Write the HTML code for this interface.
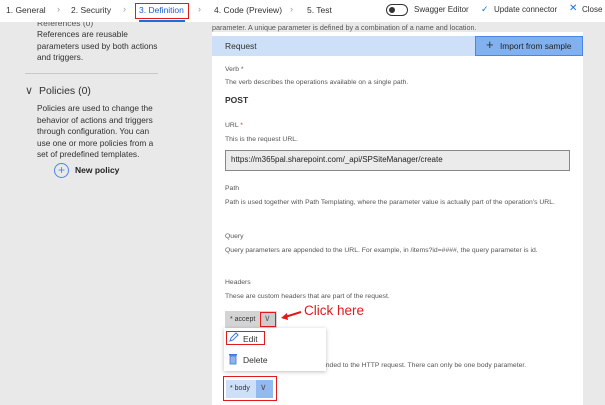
<!DOCTYPE html>
<html><head><style>
*{margin:0;padding:0;box-sizing:border-box}
body{width:605px;height:405px;overflow:hidden;background:#e9e9e9;font-family:"Liberation Sans",sans-serif;color:#323130;position:relative}
.a{position:absolute;white-space:nowrap}
.s{font-size:6.8px;color:#555}
.lt{font-size:8.3px;color:#323130;line-height:11.5px}
.t{font-size:8.5px;color:#323130;top:5px}
.c{font-size:9px;color:#999;top:4px}
</style></head><body>
<div class="a" style="left:37px;top:18px;font-size:8.5px;color:#555">References (0)</div>
<div class="a" style="left:0;top:0;width:605px;height:22px;background:#fff"></div>
<div class="a t" style="left:6px">1. General</div>
<div class="a c" style="left:57px">&#8250;</div>
<div class="a t" style="left:71px">2. Security</div>
<div class="a c" style="left:123px">&#8250;</div>
<div class="a" style="left:135px;top:3px;width:54px;height:16px;border:1.5px solid #e01b1b"></div>
<div class="a t" style="left:139px;color:#1a5fcf">3. Definition</div>
<div class="a" style="left:139px;top:20px;width:46px;height:2px;background:#1a6fe0"></div>
<div class="a c" style="left:198px">&#8250;</div>
<div class="a t" style="left:214px">4. Code (Preview)</div>
<div class="a c" style="left:290px">&#8250;</div>
<div class="a t" style="left:307px">5. Test</div>
<div class="a" style="left:386px;top:4px;width:22px;height:12px;border:1px solid #333;border-radius:6px"></div>
<div class="a" style="left:389px;top:7px;width:6px;height:6px;background:#333;border-radius:50%"></div>
<div class="a" style="left:414px;top:5px;font-size:8px">Swagger Editor</div>
<div class="a" style="left:481px;top:4px;font-size:9px;color:#1a6fe0">&#10003;</div>
<div class="a" style="left:494px;top:5px;font-size:8px">Update connector</div>
<div class="a" style="left:569px;top:3px;font-size:10px;color:#1a6fe0">&#10005;</div>
<div class="a" style="left:582px;top:5px;font-size:8px">Close</div>

<div class="a lt" style="left:37px;top:29px">References are reusable<br>parameters used by both actions<br>and triggers.</div>
<div class="a" style="left:25px;top:73px;width:133px;height:1px;background:#c8c8c8"></div>
<div class="a" style="left:25px;top:84px;font-size:11px;color:#444">&#8744;</div>
<div class="a" style="left:39px;top:85px;font-size:10.5px;color:#323130">Policies (0)</div>
<div class="a lt" style="left:37px;top:103px">Policies are used to change the<br>behavior of actions and triggers<br>through configuration. You can<br>use one or more policies from a<br>set of predefined templates.</div>
<div class="a" style="left:54px;top:163px;width:15px;height:15px;border:1px solid #4a86e8;border-radius:50%;color:#4a86e8;font-size:12px;line-height:12px;text-align:center">+</div>
<div class="a" style="left:75px;top:165px;font-size:8.5px;font-weight:bold;color:#222">New policy</div>

<div class="a" style="left:212px;top:32px;width:371px;height:373px;background:#fff"></div>
<div class="a" style="left:212px;top:23px;font-size:7.2px;color:#555">parameter. A unique parameter is defined by a combination of a name and location.</div>
<div class="a" style="left:212px;top:36px;width:263px;height:20px;background:#cde0f7"></div>
<div class="a" style="left:225px;top:41px;font-size:8.5px">Request</div>
<div class="a" style="left:475px;top:36px;width:108px;height:20px;background:#82b1f0;border:1px solid #4a86e8"></div>
<div class="a" style="left:486px;top:37px;font-size:13px;color:#333">+</div>
<div class="a" style="left:500px;top:41px;font-size:8.3px;color:#222">Import from sample</div>

<div class="a s" style="left:225px;top:66px">Verb *</div>
<div class="a s" style="left:225px;top:79px">The verb describes the operations available on a single path.</div>
<div class="a" style="left:225px;top:95px;font-size:8.5px;font-weight:bold;color:#333">POST</div>
<div class="a s" style="left:225px;top:122px">URL <span style="color:#c33">*</span></div>
<div class="a s" style="left:225px;top:136px">This is the request URL.</div>
<div class="a" style="left:225px;top:150px;width:345px;height:21px;background:#ebebeb;border:1px solid #888"></div>
<div class="a" style="left:231px;top:155px;font-size:8px;color:#222">https://m365pal.sharepoint.com/_api/SPSiteManager/create</div>
<div class="a s" style="left:225px;top:185px">Path</div>
<div class="a s" style="left:225px;top:199px">Path is used together with Path Templating, where the parameter value is actually part of the operation's URL.</div>
<div class="a s" style="left:225px;top:233px">Query</div>
<div class="a s" style="left:225px;top:247px">Query parameters are appended to the URL. For example, in /items?id=####, the query parameter is id.</div>
<div class="a s" style="left:225px;top:279px">Headers</div>
<div class="a s" style="left:225px;top:293px">These are custom headers that are part of the request.</div>

<div class="a" style="left:225px;top:311px;width:52px;height:18px;background:#d4d4d4"></div>
<div class="a" style="left:230px;top:316px;font-size:7px;color:#333">* accept</div>
<div class="a" style="left:260px;top:312px;width:16px;height:15px;border:1.5px solid #e01b1b;background:#ccc"></div>
<div class="a" style="left:264px;top:313px;font-size:9px;color:#666">&#8744;</div>
<svg class="a" style="left:279px;top:309px" width="24" height="12"><path d="M22 3 L6 8" stroke="#e01b1b" stroke-width="2"/><path d="M2 9 L8 4 L9 11 Z" fill="#e01b1b"/></svg>
<div class="a" style="left:304px;top:303px;font-size:13.5px;color:#e01b1b">Click here</div>

<div class="a s" style="left:322px;top:362px">ended to the HTTP request. There can only be one body parameter.</div>
<div class="a" style="left:224px;top:328px;width:102px;height:43px;background:#fff;box-shadow:0 1px 4px rgba(0,0,0,.25)"></div>
<div class="a" style="left:226px;top:331px;width:39px;height:14px;border:1.5px solid #e01b1b"></div>
<svg class="a" style="left:228px;top:332px" width="11" height="11"><path d="M2 9 L3 6 L8 1 L10 3 L5 8 Z" fill="none" stroke="#3b78e0" stroke-width="1"/></svg>
<div class="a" style="left:243px;top:334px;font-size:8.5px;color:#333">Edit</div>
<svg class="a" style="left:228px;top:353px" width="10" height="12"><rect x="2" y="3" width="6" height="8" fill="#8fb4ec" stroke="#3b78e0" stroke-width="0.8"/><rect x="1" y="1" width="8" height="1.5" fill="#3b78e0"/></svg>
<div class="a" style="left:243px;top:355px;font-size:8.5px;color:#333">Delete</div>

<div class="a" style="left:223px;top:376px;width:54px;height:25px;border:1.5px solid #e01b1b"></div>
<div class="a" style="left:226px;top:380px;width:47px;height:18px;background:#cde0f7"></div>
<div class="a" style="left:256px;top:380px;width:17px;height:18px;background:#92b9f0"></div>
<div class="a" style="left:230px;top:385px;font-size:7px;color:#333">* body</div>
<div class="a" style="left:260px;top:382px;font-size:9px;color:#555">&#8744;</div>
</body></html>
